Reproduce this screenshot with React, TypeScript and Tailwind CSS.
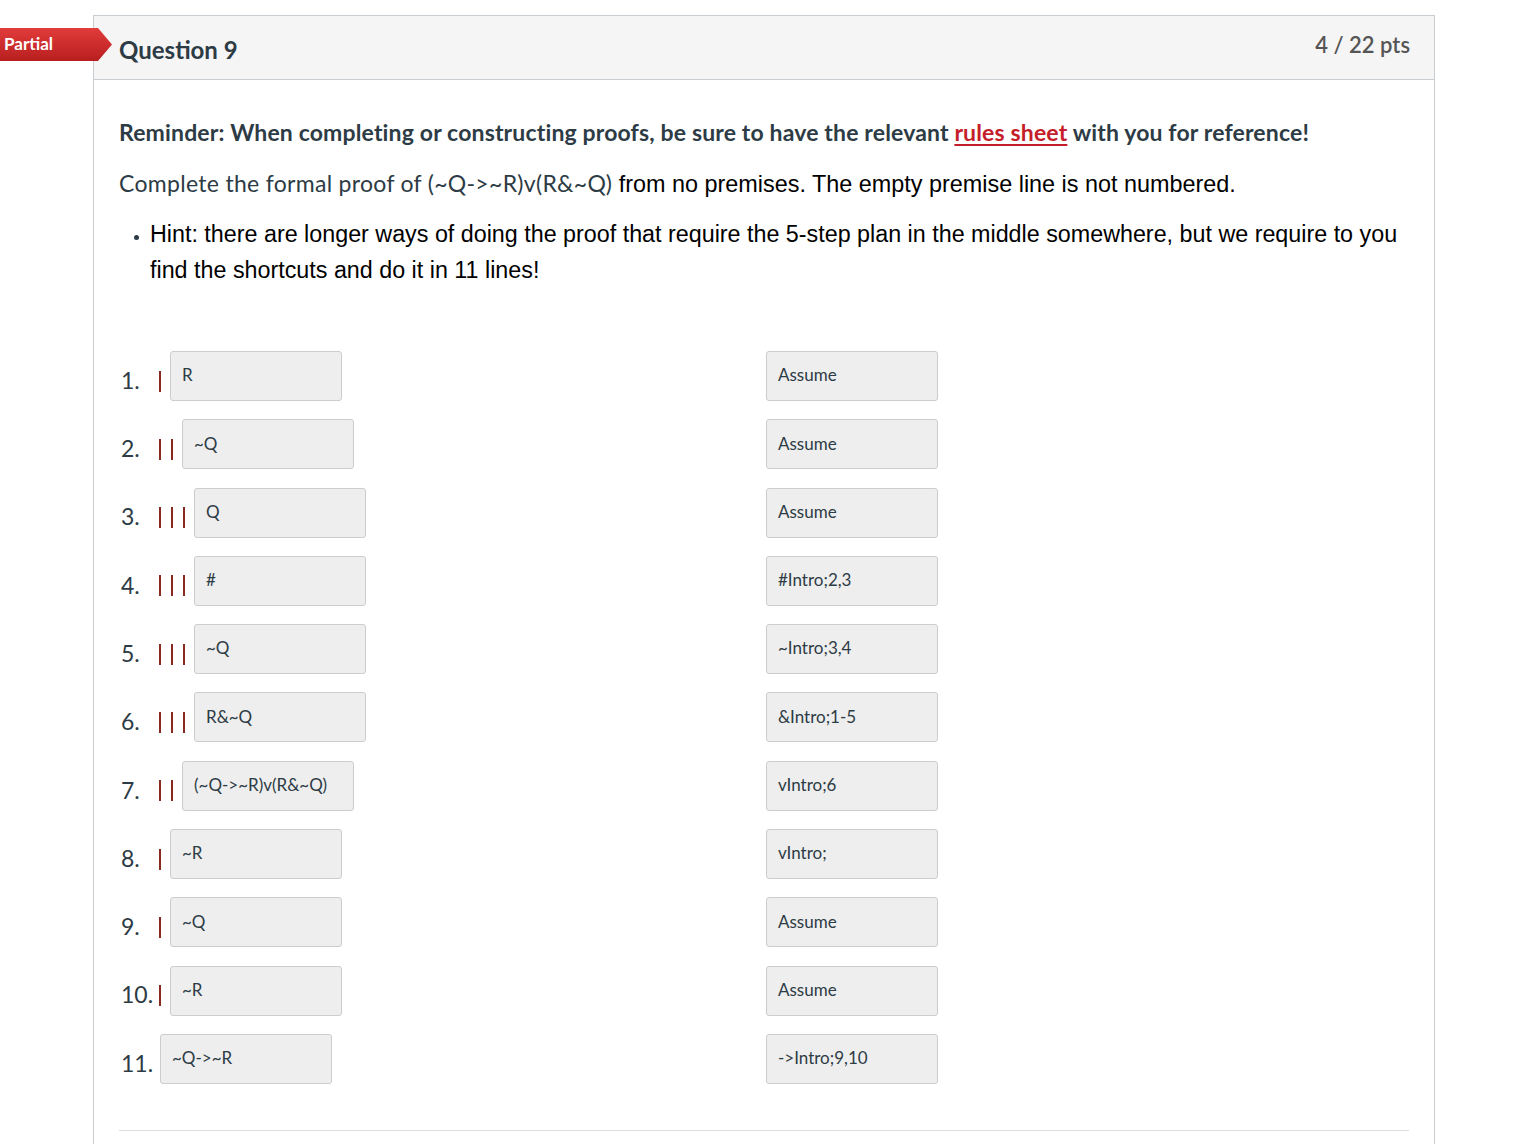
const lato = "font-['Lato','Noto_Sans',sans-serif]";
const arial = "font-['Liberation_Sans',Arial,sans-serif]";

const rows: { n: number; depth: number; formula: string; rule: string }[] = [
  { n: 1, depth: 1, formula: "R", rule: "Assume" },
  { n: 2, depth: 2, formula: "~Q", rule: "Assume" },
  { n: 3, depth: 3, formula: "Q", rule: "Assume" },
  { n: 4, depth: 3, formula: "#", rule: "#Intro;2,3" },
  { n: 5, depth: 3, formula: "~Q", rule: "~Intro;3,4" },
  { n: 6, depth: 3, formula: "R&~Q", rule: "&Intro;1-5" },
  { n: 7, depth: 2, formula: "(~Q->~R)v(R&~Q)", rule: "vIntro;6" },
  { n: 8, depth: 1, formula: "~R", rule: "vIntro;" },
  { n: 9, depth: 1, formula: "~Q", rule: "Assume" },
  { n: 10, depth: 1, formula: "~R", rule: "Assume" },
  { n: 11, depth: 0, formula: "~Q->~R", rule: "->Intro;9,10" },
];

function Field({ value }: { value: string }) {
  return (
    <div className={`${lato} w-[172px] h-[50px] flex items-center px-[11px] pb-[2px] bg-[#eeeeee] border border-[#cccccc] rounded-[3px] text-[17px] text-[#2d3b45]`}>
      {value}
    </div>
  );
}

export default function App() {
  return (
    <div className="min-h-[1144px] bg-white pt-[15px] relative overflow-hidden">
      {/* grade flag */}
      <div
        className={`${lato} absolute left-0 top-[28px] h-[33px] w-[112px] bg-gradient-to-b from-[#e23b3b] to-[#b81e1e] text-white font-bold text-[17px] pl-[4px] leading-[31px] [clip-path:polygon(0_0,98px_0,112px_50%,98px_100%,0_100%)] z-10`}
      >
        Partial
      </div>

      <div className="ml-[93px] w-[1342px] border border-[#c7cdd1] border-b-0 min-h-[1129px]">
        <div className={`${lato} h-[64px] bg-[#f5f5f5] border-b border-[#c7cdd1] flex justify-between pl-[25px] pr-[24px]`}>
          <h2 className="text-[24px] leading-[30px] font-bold text-[#2d3b45] pt-[19px]">Question 9</h2>
          <div className="text-[22px] leading-[30px] font-semibold text-[#555555] pt-[14px]">4 / 22 pts</div>
        </div>

        <div className="px-[25px] pt-[36px]">
          <p className={`${lato} text-[23px] tracking-[0.15px] font-bold text-[#2d3b45] leading-[32px]`}>
            Reminder: When completing or constructing proofs, be sure to have the relevant{" "}
            <a className="text-[#c41e2a] underline underline-offset-[3px]">rules sheet</a> with you for reference!
          </p>
          <p className="mt-[19px] leading-[32px] whitespace-nowrap">
            <span className={`${lato} text-[23px] tracking-[0.3px] text-[#2d3b45]`}>Complete the formal proof of (~Q-&gt;~R)v(R&amp;~Q)</span>
            <span className={`${arial} text-black text-[23.4px]`}> from no premises. The empty premise line is not numbered.</span>
          </p>
          <ul className={`${arial} mt-[14px] pl-[31px] text-[23.3px] leading-[36px] text-black list-disc marker:text-[#2d3b45] marker:text-[16px]`}>
            <li>
              Hint: there are longer ways of doing the proof that require the 5-step plan in the middle somewhere, but we require to you find the shortcuts and do it in 11 lines!
            </li>
          </ul>

          <div className="mt-[63px] flex flex-col gap-[18.3px]">
            {rows.map((r) => (
              <div key={r.n} className="grid grid-cols-[647px_1fr] items-center">
                <div className="flex items-center">
                  <span className={`${lato} w-[35px] pl-[2px] text-[23px] text-[#2d3b45] pt-[8px]`}>{r.n}.</span>
                  {Array.from({ length: r.depth }).map((_, i) => (
                    <span key={i} className="w-[12px] flex justify-center pt-[10px]">
                      <span className="block w-[2px] h-[21px] bg-[#8a2a1f]" />
                    </span>
                  ))}
                  <div className={r.depth === 0 ? "ml-[6px]" : "ml-[4px]"}>
                    <Field value={r.formula} />
                  </div>
                </div>
                <Field value={r.rule} />
              </div>
            ))}
          </div>

          <div className="mt-[46px] border-t border-[#dddddd]" />
        </div>
      </div>
    </div>
  );
}
